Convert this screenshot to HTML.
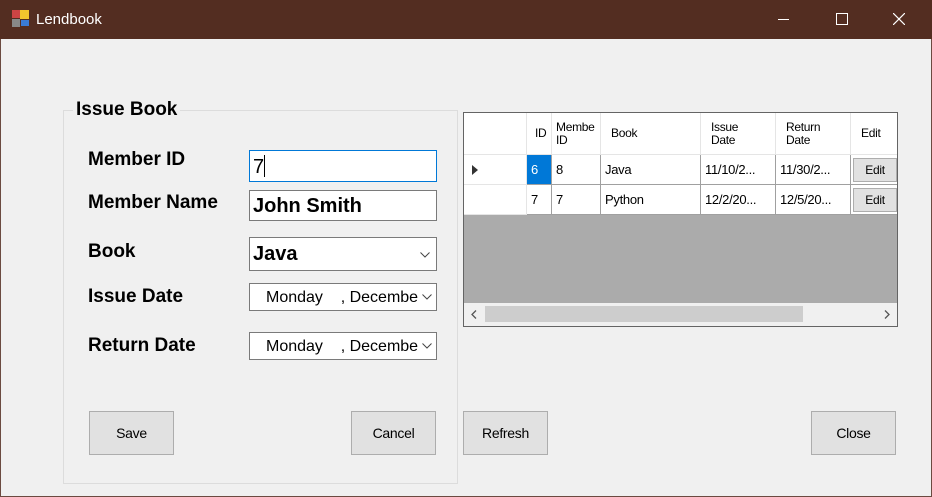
<!DOCTYPE html>
<html><head><style>
body{margin:0;width:932px;height:497px;background:#f0f0f0;font-family:"Liberation Sans",Arial,sans-serif;position:relative;overflow:hidden}
.a{position:absolute}
.tb{left:0;top:0;width:932px;height:39px;background:#532d21;color:#fff}
.frame{left:0;top:39px;width:930px;height:457px;border-left:1px solid #6b4a40;border-right:1px solid #6b4a40;border-bottom:1px solid #6b4a40}
.lbl{font-weight:bold;font-size:19px;color:#000}
.inp{background:#fff;border:1px solid #7a7a7a;box-sizing:border-box}
.btn{background:#e1e1e1;border:1px solid #adadad;box-sizing:border-box;font-size:14px;display:flex;align-items:center;justify-content:center;letter-spacing:-0.3px}
.c{position:absolute;border-right:1px solid #a0a0a0;border-bottom:1px solid #a0a0a0;box-sizing:border-box;font-size:13px;background:#fff;padding-left:4px;display:flex;align-items:center;letter-spacing:-0.3px}
.h{font-size:12px;line-height:13px;border-right:1px solid #e5e5e5;border-bottom:1px solid #e5e5e5}
.chev{position:absolute;right:0;top:0;width:18px;height:100%;background:#fff}
</style></head><body>
<div class="a tb">
 <svg class="a" style="left:12px;top:10px" width="18" height="18"><rect x="0" y="0" width="8" height="8" fill="#c44"/><rect x="8" y="0" width="9" height="9" fill="#f3c52d"/><rect x="0" y="9" width="8" height="8" fill="#888"/><rect x="9" y="10" width="8" height="6" fill="#3a7bd5"/></svg>
 <div class="a" style="left:36px;top:11px;font-size:15px">Lendbook</div>
 <div class="a" style="left:778px;top:19px;width:11px;height:1px;background:#fff"></div>
 <div class="a" style="left:836px;top:13px;width:10px;height:10px;border:1px solid #fff"></div>
 <svg class="a" style="left:893px;top:13px" width="12" height="12"><path d="M0 0L12 12M12 0L0 12" stroke="#fff" stroke-width="1.2"/></svg>
</div>
<div class="a frame"></div>
<div class="a" style="left:63px;top:110px;width:393px;height:372px;border:1px solid #dcdcdc"></div>
<div class="a lbl" style="left:73px;top:99px;background:#f0f0f0;padding:0 3px">Issue Book</div>
<div class="a lbl" style="left:88px;top:149px">Member ID</div>
<div class="a lbl" style="left:88px;top:192px">Member Name</div>
<div class="a lbl" style="left:88px;top:241px">Book</div>
<div class="a lbl" style="left:88px;top:286px">Issue Date</div>
<div class="a lbl" style="left:88px;top:335px">Return Date</div>
<div class="a inp" style="left:249px;top:150px;width:188px;height:32px;border-color:#0078d7;font-size:20px;padding:4px 3px">7<span style="display:inline-block;width:1px;height:22px;background:#000;vertical-align:-4px"></span></div>
<div class="a inp" style="left:249px;top:190px;width:188px;height:31px;font-size:20px;font-weight:bold;padding:4px 3px">John Smith</div>
<div class="a inp" style="left:249px;top:237px;width:188px;height:34px;font-size:20px;font-weight:bold;padding:5px 3px">Java<svg class="a" style="right:6px;top:14px" width="10" height="6"><path d="M0.5 0.5L5 5L9.5 0.5" stroke="#444" fill="none"/></svg></div>
<div class="a inp" style="left:249px;top:283px;width:188px;height:28px;font-size:16px;padding:5px 0 0 16px;white-space:nowrap;overflow:hidden">Monday&nbsp;&nbsp;&nbsp; , Decembe<span class="chev"><svg class="a" style="left:4px;top:10px" width="10" height="6"><path d="M0.5 0.5L5 5L9.5 0.5" stroke="#444" fill="none"/></svg></span></div>
<div class="a inp" style="left:249px;top:332px;width:188px;height:28px;font-size:16px;padding:5px 0 0 16px;white-space:nowrap;overflow:hidden">Monday&nbsp;&nbsp;&nbsp; , Decembe<span class="chev"><svg class="a" style="left:4px;top:10px" width="10" height="6"><path d="M0.5 0.5L5 5L9.5 0.5" stroke="#444" fill="none"/></svg></span></div>
<div class="a btn" style="left:89px;top:411px;width:85px;height:44px">Save</div>
<div class="a btn" style="left:351px;top:411px;width:85px;height:44px">Cancel</div>
<div class="a btn" style="left:463px;top:411px;width:85px;height:44px">Refresh</div>
<div class="a btn" style="left:811px;top:411px;width:85px;height:44px">Close</div>
<div class="a" style="left:463px;top:112px;width:435px;height:215px;border:1px solid #646464;box-sizing:border-box;background:#ababab;overflow:hidden">
 <div class="c h" style="left:0;top:0;width:63px;height:42px"></div>
 <div class="c h" style="left:63px;top:0;width:25px;height:42px;padding-left:8px">ID</div>
 <div class="c h" style="left:88px;top:0;width:49px;height:42px;overflow:hidden;white-space:nowrap">Membe<br>ID</div>
 <div class="c h" style="left:137px;top:0;width:100px;height:42px;padding-left:10px">Book</div>
 <div class="c h" style="left:237px;top:0;width:75px;height:42px;padding-left:10px">Issue<br>Date</div>
 <div class="c h" style="left:312px;top:0;width:75px;height:42px;padding-left:10px">Return<br>Date</div>
 <div class="c h" style="left:387px;top:0;width:50px;height:42px;padding-left:10px">Edit</div>
 <div class="c" style="left:0;top:42px;width:63px;height:30px;border-right-color:#e5e5e5;border-bottom-color:#e5e5e5;padding-left:8px"><svg width="6" height="10"><path d="M0 0L6 5L0 10Z" fill="#333"/></svg></div>
 <div class="c" style="left:63px;top:42px;width:25px;height:30px;background:#0078d7;color:#fff">6</div>
 <div class="c" style="left:88px;top:42px;width:49px;height:30px">8</div>
 <div class="c" style="left:137px;top:42px;width:100px;height:30px">Java</div>
 <div class="c" style="left:237px;top:42px;width:75px;height:30px">11/10/2...</div>
 <div class="c" style="left:312px;top:42px;width:75px;height:30px">11/30/2...</div>
 <div class="c" style="left:387px;top:42px;width:50px;height:30px;padding:2px"><div class="btn" style="width:44px;height:24px;font-size:12px">Edit</div></div>
 <div class="c" style="left:0;top:72px;width:63px;height:30px;border-right-color:#e5e5e5;border-bottom-color:#e5e5e5"></div>
 <div class="c" style="left:63px;top:72px;width:25px;height:30px">7</div>
 <div class="c" style="left:88px;top:72px;width:49px;height:30px">7</div>
 <div class="c" style="left:137px;top:72px;width:100px;height:30px">Python</div>
 <div class="c" style="left:237px;top:72px;width:75px;height:30px">12/2/20...</div>
 <div class="c" style="left:312px;top:72px;width:75px;height:30px">12/5/20...</div>
 <div class="c" style="left:387px;top:72px;width:50px;height:30px;padding:2px"><div class="btn" style="width:44px;height:24px;font-size:12px">Edit</div></div>
 <div class="a" style="left:0;top:190px;width:433px;height:23px;background:#f0f0f0">
  <div class="a" style="left:21px;top:3px;width:318px;height:16px;background:#cdcdcd"></div>
  <svg class="a" style="left:7px;top:7px" width="6" height="9"><path d="M5 0.5L1 4.5L5 8.5" stroke="#555" fill="none" stroke-width="1.3"/></svg>
  <svg class="a" style="right:7px;top:7px" width="6" height="9"><path d="M1 0.5L5 4.5L1 8.5" stroke="#555" fill="none" stroke-width="1.3"/></svg>
 </div>
</div>
</body></html>
